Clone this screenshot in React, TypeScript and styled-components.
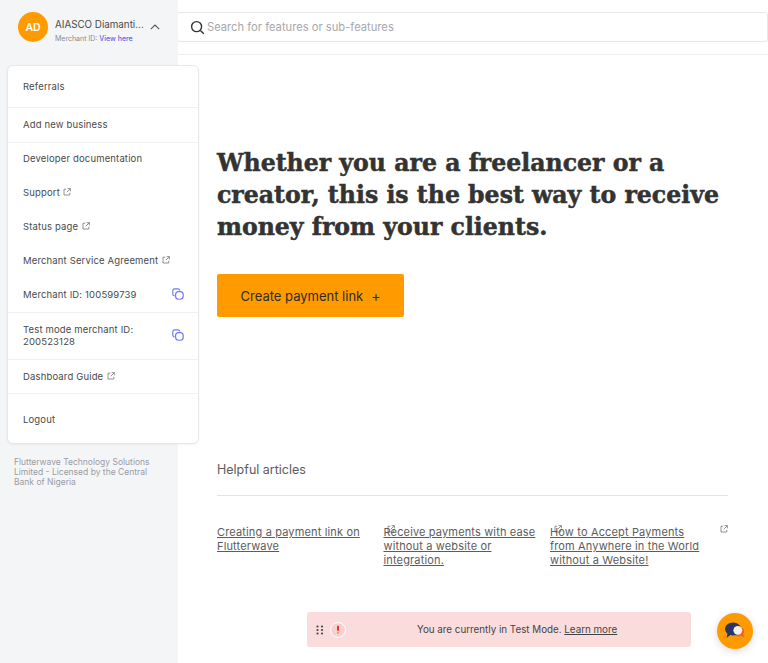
import styled, { createGlobalStyle } from "styled-components"

const GlobalStyle = createGlobalStyle`
    html, body {
        margin: 0;
        padding: 0;
        background: #ffffff;
        font-family: "Inter", "Liberation Sans", sans-serif;
        color: #3f3f46;
    }
    * {
        box-sizing: border-box;
    }
`

const ExternalIcon = () => (
    <svg width="8" height="8" viewBox="0 0 8 8" fill="none" stroke="#777" strokeWidth="0.8">
        <path d="M3.2 1.2H1v5.8h5.8V4.8" />
        <path d="M4.6.6h2.8v2.8M7.3.7 3.8 4.2" />
    </svg>
)

const CopyIcon = () => (
    <svg width="12" height="12" viewBox="0 0 12 12" fill="none" stroke="#6f78f0" strokeWidth="1.15">
        <rect x="3.6" y="3.6" width="7.6" height="7.6" rx="3" />
        <path d="M2.6 7.8A1.8 1.8 0 0 1 .8 6V2.6A1.8 1.8 0 0 1 2.6.8H6a1.8 1.8 0 0 1 1.8 1.8" />
    </svg>
)

const menuItems = [
    { label: "Referrals", height: 42, border: true },
    { label: "Add new business", height: 35, border: true },
    { label: "Developer documentation", height: 32 },
    { label: "Support", height: 35, external: true },
    { label: "Status page", height: 34, external: true },
    { label: "Merchant Service Agreement", height: 34, external: true },
    { label: "Merchant ID: 100599739", height: 35, copy: true, border: true },
    { label: "Test mode merchant ID: 200523128", height: 47, copy: true, border: true, narrow: true },
    { label: "Dashboard Guide", height: 34, external: true, border: true },
    { label: "Logout", height: 49 },
]

const articles = [
    "Creating a payment link on Flutterwave",
    "Receive payments with ease without a website or integration.",
    "How to Accept Payments from Anywhere in the World without a Website!",
]

export default function App() {
    return (
        <Page>
            <GlobalStyle />
            <Sidebar>
                <Account>
                    <Avatar>AD</Avatar>
                    <AccountText>
                        <AccountName>AIASCO Diamanti...</AccountName>
                        <AccountMeta>
                            Merchant ID: <ViewHere>View here</ViewHere>
                        </AccountMeta>
                    </AccountText>
                    <svg width="10" height="6" viewBox="0 0 10 6" fill="none" stroke="#555" strokeWidth="1.1">
                        <path d="M.8 5.2 5 1l4.2 4.2" />
                    </svg>
                </Account>
                <Licence>Flutterwave Technology Solutions Limited - Licensed by the Central Bank of Nigeria</Licence>
                <Menu>
                    {menuItems.map((item) => (
                        <MenuRow key={item.label} $height={item.height} $border={item.border}>
                            <MenuLabel $narrow={item.narrow}>
                                {item.label}
                                {item.external && <ExternalIcon />}
                            </MenuLabel>
                            {item.copy && <CopyIcon />}
                        </MenuRow>
                    ))}
                </Menu>
            </Sidebar>
            <Main>
                <TopBar>
                    <SearchBox>
                        <svg width="15" height="15" viewBox="0 0 15 15" fill="none" stroke="#333" strokeWidth="1.4">
                            <circle cx="6.6" cy="6.6" r="5" />
                            <path d="m10.4 10.4 3.4 3.4" />
                        </svg>
                        <SearchText>Search for features or sub-features</SearchText>
                    </SearchBox>
                </TopBar>
                <Content>
                    <Heading>Whether you are a freelancer or a creator, this is the best way to receive money from your clients.</Heading>
                    <CreateButton>
                        Create payment link <Plus>+</Plus>
                    </CreateButton>
                    <ArticlesTitle>Helpful articles</ArticlesTitle>
                    <ArticlesGrid>
                        {articles.map((article) => (
                            <Article key={article}>
                                <ArticleLink>{article}</ArticleLink>
                                <ArticleIcon>
                                    <ExternalIcon />
                                </ArticleIcon>
                            </Article>
                        ))}
                    </ArticlesGrid>
                </Content>
            </Main>
            <Notice>
                <svg width="8" height="10" viewBox="0 0 8 10" fill="#444">
                    <circle cx="1.5" cy="1.5" r="1.1" />
                    <circle cx="6" cy="1.5" r="1.1" />
                    <circle cx="1.5" cy="5" r="1.1" />
                    <circle cx="6" cy="5" r="1.1" />
                    <circle cx="1.5" cy="8.5" r="1.1" />
                    <circle cx="6" cy="8.5" r="1.1" />
                </svg>
                <svg width="16" height="16" viewBox="0 0 16 16">
                    <circle cx="8" cy="8" r="7.4" fill="#f9d0d0" stroke="#ffffff" strokeWidth="1" />
                    <rect x="7" y="3.8" width="2" height="5" rx="0.6" fill="#e0393e" />
                    <rect x="7" y="9.8" width="2" height="2" rx="0.6" fill="#f2a23c" />
                </svg>
                <NoticeText>
                    You are currently in Test Mode. <NoticeLink>Learn more</NoticeLink>
                </NoticeText>
            </Notice>
            <ChatButton>
                <svg width="20" height="17" viewBox="0 0 20 17">
                    <path d="M14 4.5a5 5 0 0 1 4.2 7.7l1 3.1-3.3-1.5A5 5 0 1 1 14 4.5z" fill="#e8622e" />
                    <path d="M8 .5c4.4 0 8 2.9 8 6.500s-3.600 6.500-8 6.500c-.9 0-1.800-.1-2.600-.4L1.600 16l.9-4.300C1 10.500 0 8.900 0 7 0 3.400 3.600.5 8 .5z" fill="#2a3563" />
                    <circle cx="12.8" cy="8.3" r="4.4" fill="#f8f0e8" />
                </svg>
            </ChatButton>
        </Page>
    )
}

const Page = styled.div`
    display: flex;
    min-height: 100vh;
    width: 768px;
    height: 663px;
    overflow: hidden;
    position: relative;
`
const Sidebar = styled.aside`
    position: relative;
    width: 178px;
    flex: none;
    background: #f4f5f7;
    padding: 12px 0 0 18px;
`
const Account = styled.div`
    display: flex;
    align-items: center;
    height: 30px;
    gap: 7px;
`
const Avatar = styled.div`
    width: 30px;
    height: 30px;
    flex: none;
    border-radius: 50%;
    background: #ff9b00;
    color: #ffffff;
    font-size: 10.5px;
    font-weight: 600;
    display: flex;
    align-items: center;
    justify-content: center;
`
const AccountText = styled.div`
    display: flex;
    flex-direction: column;
    gap: 3px;
    width: 88px;
    padding-top: 6px;
`
const AccountName = styled.div`
    font-size: 9.8px;
    line-height: 13px;
    color: #4a4a4a;
    white-space: nowrap;
`
const AccountMeta = styled.div`
    font-size: 7px;
    line-height: 9px;
    color: #8a8a8a;
    white-space: nowrap;
`
const ViewHere = styled.span`
    color: #5b63e6;
    font-weight: 500;
`
const Licence = styled.p`
    margin: 415px 22px 0 -4px;
    font-size: 8.5px;
    line-height: 10px;
    color: #9a9ca3;
`
const Menu = styled.div`
    position: absolute;
    z-index: 2;
    top: 65px;
    left: 7px;
    width: 192px;
    background: #ffffff;
    border: 1px solid #e6e7ea;
    border-radius: 6px;
    box-shadow: 0 1px 3px rgba(0, 0, 0, 0.05);
    overflow: hidden;
`
const MenuRow = styled.div<{ $height: number; $border?: boolean }>`
    display: flex;
    align-items: center;
    justify-content: space-between;
    height: ${({ $height }) => $height}px;
    padding: 0 14px 0 15px;
    border-bottom: ${({ $border }) => ($border ? "1px solid #f1f1f3" : "none")};

    &:last-child {
        padding-top: 2px;
    }

    > svg {
        margin-bottom: 2px;
    }
`
const MenuLabel = styled.span<{ $narrow?: boolean }>`
    display: block;
    max-width: ${({ $narrow }) => ($narrow ? "130px" : "none")};
    font-size: 9.5px;
    line-height: 12px;
    letter-spacing: 0.15px;
    color: #4a4a4a;

    svg {
        margin-left: 3.5px;
    }
`
const Main = styled.main`
    flex: 1;
    min-width: 0;
`
const TopBar = styled.header`
    height: 55px;
    padding-top: 12px;
    border-bottom: 1px solid #eceef1;
`
const SearchBox = styled.div`
    display: flex;
    align-items: center;
    gap: 2px;
    height: 30px;
    margin-left: -1px;
    padding-left: 12px;
    background: #ffffff;
    border: 1px solid #e6e7ea;
    border-radius: 3px;
`
const SearchText = styled.span`
    font-size: 11.2px;
    color: #a8a8ab;
`
const Content = styled.section`
    padding: 92px 40px 0 39px;
`
const Heading = styled.h1`
    margin: 0;
    font-family: "DejaVu Serif", serif;
    font-size: 23.6px;
    line-height: 32px;
    font-weight: 700;
    color: #333333;
    -webkit-text-stroke: 0.5px #333333;
`
const CreateButton = styled.button`
    display: flex;
    align-items: center;
    justify-content: center;
    width: 187px;
    height: 43px;
    margin-top: 31px;
    border: none;
    border-radius: 2px;
    background: #ff9b00;
    color: #2d2d2d;
    font-family: inherit;
    font-size: 13px;
`
const Plus = styled.span`
    margin-left: 8px;
    font-size: 14px;
`
const ArticlesTitle = styled.h2`
    margin: 145px 0 0;
    padding-bottom: 17px;
    border-bottom: 1px solid #e3e4e6;
    font-size: 12.5px;
    line-height: 16px;
    font-weight: 400;
    color: #5c5c5c;
`
const ArticlesGrid = styled.div`
    display: grid;
    grid-template-columns: repeat(3, 166.5px);
    margin-top: 29px;
`
const Article = styled.div`
    position: relative;
    width: 178px;
    padding-right: 18px;
`
const ArticleLink = styled.a`
    display: block;
    font-size: 11px;
    line-height: 14px;
    letter-spacing: 0.15px;
    color: #5c5c5c;
    text-decoration: underline;
`
const ArticleIcon = styled.span`
    position: absolute;
    top: 0;
    right: 0;
    display: flex;
`
const Notice = styled.div`
    position: absolute;
    left: 307px;
    top: 612px;
    width: 384px;
    height: 35px;
    display: flex;
    align-items: center;
    gap: 6px;
    padding-left: 9px;
    background: #fadcdc;
    border-radius: 3px;
`
const NoticeText = styled.span`
    margin-left: 65px;
    font-size: 9.8px;
    color: #444444;
`
const NoticeLink = styled.a`
    text-decoration: underline;
`
const ChatButton = styled.div`
    position: absolute;
    left: 717px;
    top: 612.5px;
    width: 36px;
    height: 36px;
    display: flex;
    align-items: center;
    justify-content: center;
    border-radius: 50%;
    background: #ff9b00;
    box-shadow: 0 2px 8px rgba(0, 0, 0, 0.15);
`
